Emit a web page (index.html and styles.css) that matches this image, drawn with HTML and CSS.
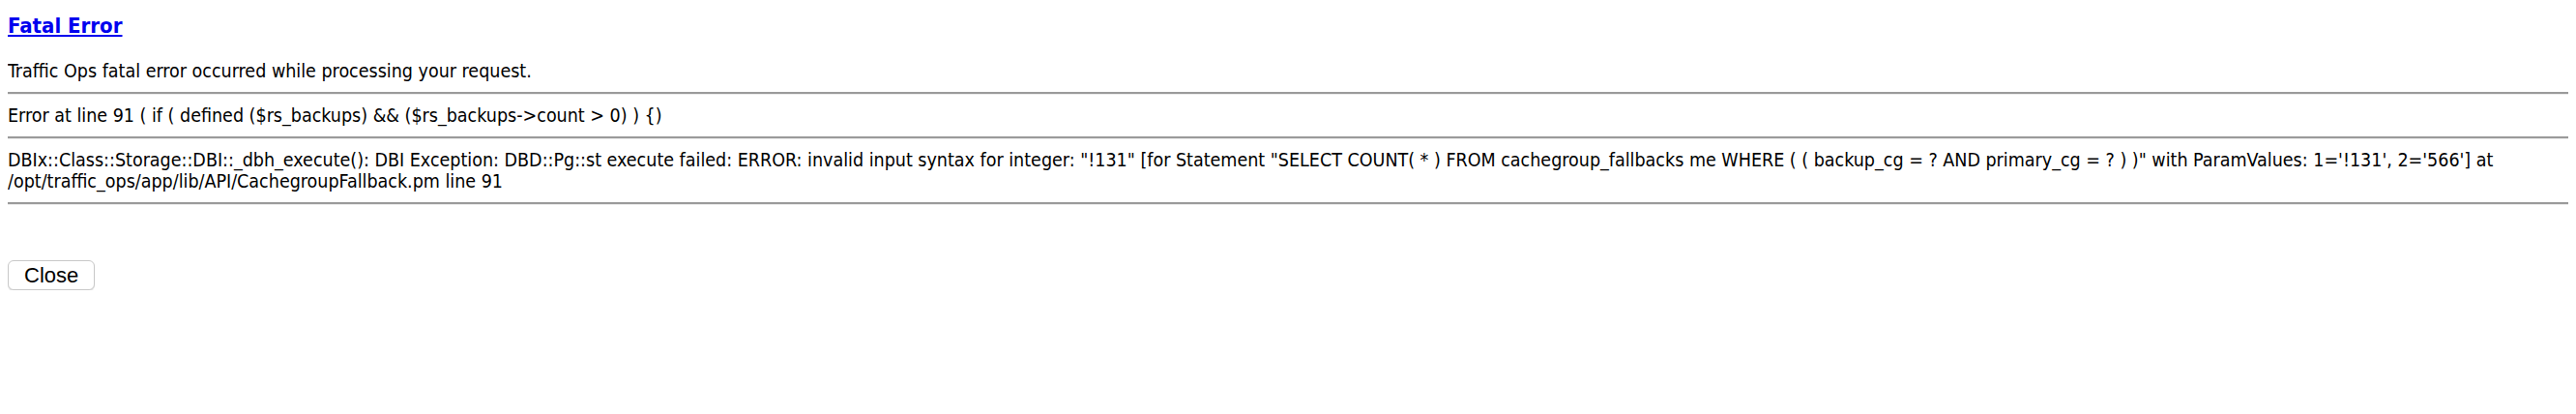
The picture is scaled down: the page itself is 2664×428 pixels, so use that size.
FILE: index.html
```html
<!DOCTYPE html>
<html lang="en">
<head>
  <meta charset="UTF-8">
  <title>Fatal Error</title>
  <link rel="stylesheet" href="styles.css">
</head>
<body>
  <div class="error-page">
    <h3 class="error-title"><a href="#">Fatal Error</a></h3>
    <p class="error-msg">Traffic Ops fatal error occurred while processing your request.</p>
    <hr>
    <p class="error-msg">Error at line 91 ( if ( defined ($rs_backups) &amp;&amp; ($rs_backups-&gt;count &gt; 0) ) {)</p>
    <hr>
    <p class="error-msg">DBIx::Class::Storage::DBI::_dbh_execute(): DBI Exception: DBD::Pg::st execute failed: ERROR: invalid input syntax for integer: "!131" [for Statement "SELECT COUNT( * ) FROM cachegroup_fallbacks me WHERE ( ( backup_cg = ? AND primary_cg = ? ) )" with ParamValues: 1='!131', 2='566'] at /opt/traffic_ops/app/lib/API/CachegroupFallback.pm line 91</p>
    <hr>
    <div class="actions">
      <button class="close-btn" onclick="window.close()">Close</button>
    </div>
  </div>
</body>
</html>
```

FILE: styles.css
```css
body {
  margin: 8px;
  font-family: "DejaVu Sans Condensed", "DejaVu Sans", sans-serif;
  font-size: 19.5px;
  color: #000;
  background-color: #fff;
}

.error-title {
  margin: 6px 0 23px 0;
  font-size: 22px;
  line-height: 26px;
  font-weight: bold;
}

.error-title a {
  color: #0000ee;
  text-decoration: underline;
}

.error-msg {
  margin: 0;
  line-height: 22px;
}

hr {
  height: 0;
  margin: 10px 0 11px 0;
  border: none;
  border-top: 2px solid #9a9a9a;
  border-bottom: 1px solid #ececec;
}

.actions {
  margin-top: 57px;
}

.close-btn {
  font-family: "Liberation Sans", Arial, sans-serif;
  font-size: 22px;
  height: 31px;
  padding: 0 16px;
  background-color: #fff;
  border: 1px solid #c9c9c9;
  border-radius: 6px;
  box-shadow: 0 1px 1px rgba(0, 0, 0, 0.12);
  color: #000;
  cursor: pointer;
}
```
